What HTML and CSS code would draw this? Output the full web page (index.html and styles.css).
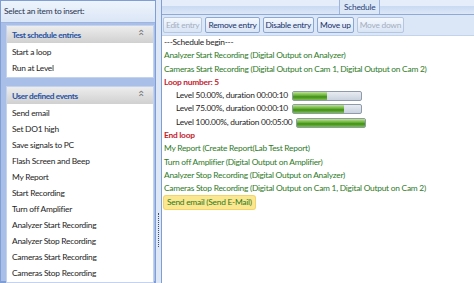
FILE: index.html
```html
<!DOCTYPE html>
<html lang="en">
<head>
    <meta charset="UTF-8">
    <title>Schedule editor</title>
    <link rel="stylesheet" href="styles.css">
</head>
<body>
    <div class="window">
        <div class="side">
            <div class="side-head">Select an item to insert:</div>
            <div class="side-body">
                <div class="group">
                    <div class="group-head"><span>Test schedule entries</span><span class="chev">&#8963;</span></div>
                    <ul class="group-list">
                        <li>Start a loop</li>
                        <li>Run at Level</li>
                    </ul>
                </div>
                <div class="group">
                    <div class="group-head"><span>User defined events</span><span class="chev">&#8963;</span></div>
                    <ul class="group-list">
                        <li>Send email</li>
                        <li>Set DO1 high</li>
                        <li>Save signals to PC</li>
                        <li>Flash Screen and Beep</li>
                        <li>My Report</li>
                        <li>Start Recording</li>
                        <li>Turn off Amplifier</li>
                        <li>Analyzer Start Recording</li>
                        <li>Analyzer Stop Recording</li>
                        <li>Cameras Start Recording</li>
                        <li>Cameras Stop Recording</li>
                    </ul>
                </div>
            </div>
        </div>
        <div class="splitter"><span class="grip"></span></div>
        <div class="main">
            <div class="main-title"><span class="tab">Schedule</span></div>
            <div class="toolbar">
                <button class="btn" disabled>Edit entry</button>
                <button class="btn">Remove entry</button>
                <button class="btn">Disable entry</button>
                <button class="btn">Move up</button>
                <button class="btn" disabled>Move down</button>
            </div>
            <div class="schedule">
                <div class="line">---Schedule begin---</div>
                <div class="line ev">Analyzer Start Recording (Digital Output on Analyzer)</div>
                <div class="line ev">Cameras Start Recording (Digital Output on Cam 1, Digital Output on Cam 2)</div>
                <div class="line loop">Loop number: 5</div>
                <div class="line level">Level 50.00%, duration 00:00:10 <span class="bar"><span class="fill" style="width: 50%"></span></span></div>
                <div class="line level">Level 75.00%, duration 00:00:10 <span class="bar"><span class="fill" style="width: 75%"></span></span></div>
                <div class="line level">Level 100.00%, duration 00:05:00 <span class="bar"><span class="fill" style="width: 100%"></span></span></div>
                <div class="line loop">End loop</div>
                <div class="line ev">My Report (Create Report(Lab Test Report)</div>
                <div class="line ev">Turn off Amplifier (Digital Output on Amplifier)</div>
                <div class="line ev">Analyzer Stop Recording (Digital Output on Analyzer)</div>
                <div class="line ev">Cameras Stop Recording (Digital Output on Cam 1, Digital Output on Cam 2)</div>
                <div class="line ev"><span class="current">Send email (Send E-Mail)</span></div>
            </div>
        </div>
    </div>
</body>
</html>
```

FILE: styles.css
```css
body {
    margin: 0;
    font-family: Lato, "Open Sans", Arial, sans-serif;
    font-size: 8.4px;
    letter-spacing: -0.25px;
    color: #1e1e1e;
    background: #fff;
}
.window {
    display: flex;
    width: 474px;
    height: 283px;
    overflow: hidden;
}
.side {
    width: 154px;
    flex: none;
    display: flex;
    flex-direction: column;
    border: 1px solid #7f9ed6;
    border-bottom-width: 2px;
    background: #a9bfe7;
}
.side-head {
    height: 21px;
    line-height: 21px;
    padding-left: 3px;
    background: linear-gradient(#eef4fc, #dbe6f6);
    border-bottom: 1px solid #9db5e0;
    color: #2a3550;
}
.side-body {
    flex: 1;
    padding: 3px 2px 0 6px;
}
.group {
    margin-bottom: 10px;
    box-shadow: 0 0 0 1px #c3d3ef;
}
.group-head {
    display: flex;
    justify-content: space-between;
    align-items: center;
    height: 17px;
    padding: 0 8px 0 5px;
    background: linear-gradient(#ededed, #d0d0d0);
    color: #2853a3;
    font-weight: bold;
    font-size: 8.3px;
    letter-spacing: -0.4px;
}
.chev {
    color: #777;
    font-size: 10px;
    line-height: 6px;
    font-weight: normal;
    text-shadow: 0 3px 0 #777;
    position: relative;
    top: -2px;
}
.group-list {
    list-style: none;
    margin: 0;
    padding: 1px 0 1px;
    background: #fff;
}
.group-list li {
    height: 16px;
    line-height: 16px;
    padding-left: 5px;
}
.splitter {
    width: 5px;
    flex: none;
    background: #dde7f6;
    border-right: 1px solid #7f9ed6;
    position: relative;
}
.grip {
    position: absolute;
    left: 2px;
    top: 213px;
    height: 34px;
    border-left: 1px dotted #3d4f6e;
}
.main {
    flex: 1;
    display: flex;
    flex-direction: column;
    background: #fff;
}
.main-title {
    height: 14px;
    background: linear-gradient(#e4edf9 40%, #c9daf2 45%, #dce7f7);
    border-bottom: 1px solid #8ea9d8;
    padding-left: 177px;
}
.tab {
    display: inline-block;
    height: 14px;
    line-height: 14px;
    padding: 0 4px;
    background: #dde8f7;
    border: 1px solid #9cb4de;
    border-top: none;
    border-bottom: none;
    color: #1f3f7a;
}
.toolbar {
    display: flex;
    gap: 3px;
    padding: 2px 0 2px 1px;
    background: #dbe6f6;
    border-bottom: 1px solid #c3d3ec;
}
.btn {
    height: 16px;
    padding: 0 2px;
    font-family: inherit;
    font-size: inherit;
    letter-spacing: inherit;
    color: #16306a;
    background: linear-gradient(#f4f8fd, #d9e5f5);
    border: 1px solid #8ca7d6;
    border-radius: 2px;
}
.btn:disabled {
    color: #a4aebf;
    border-color: #b5c6e3;
}
.schedule {
    flex: 1;
    padding: 0 2px;
}
.line {
    height: 13.3px;
    line-height: 13.3px;
    white-space: nowrap;
}
.ev {
    color: #2d7a1f;
}
.loop {
    color: #c4222e;
    font-weight: bold;
}
.level {
    padding-left: 12px;
}
.bar {
    display: inline-block;
    vertical-align: middle;
    width: 68px;
    height: 8px;
    margin-left: 2px;
    border: 1px solid #8f9bab;
    border-radius: 2px;
    background: linear-gradient(#e8ecf2, #c9d2de);
}
.fill {
    display: block;
    height: 100%;
    background: linear-gradient(#bfe392, #5aa82a 50%, #3f8c18 60%, #7cc04a);
}
.current {
    display: inline-block;
    padding: 0 3px;
    line-height: 13px;
    background: #fbe78f;
    border-radius: 2px;
    box-shadow: 0 0 0 1px #f3d46a;
}
```
